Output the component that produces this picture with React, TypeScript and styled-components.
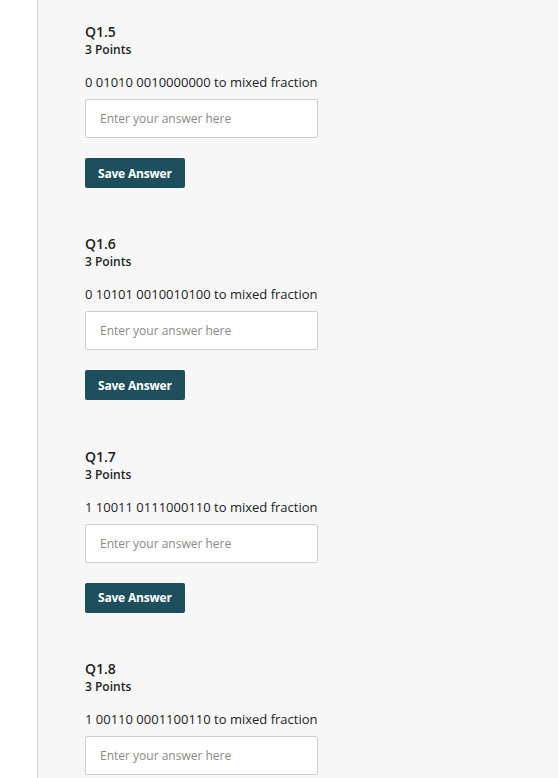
import React from 'react';
import styled, { createGlobalStyle } from 'styled-components';

type Question = {
  id: string;
  points: number;
  prompt: string;
};

const questions: Question[] = [
  { id: 'Q1.5', points: 3, prompt: '0 01010 0010000000 to mixed fraction' },
  { id: 'Q1.6', points: 3, prompt: '0 10101 0010010100 to mixed fraction' },
  { id: 'Q1.7', points: 3, prompt: '1 10011 0111000110 to mixed fraction' },
  { id: 'Q1.8', points: 3, prompt: '1 00110 0001100110 to mixed fraction' },
];

const GlobalStyle = createGlobalStyle`
  html, body {
    margin: 0;
    padding: 0;
    background: #ffffff;
    font-family: "Open Sans", "Noto Sans", sans-serif;
    color: #222;
  }
`;

const Page = styled.div`
  display: flex;
  height: 778px;
  overflow: hidden;
`;

const Sidebar = styled.div`
  width: 37px;
  flex-shrink: 0;
  background: #ffffff;
`;

const Main = styled.main`
  flex: 1;
  background: #f7f7f7;
  border-left: 1px solid #d6d6d6;
  padding: 22px 0 0 47px;
`;

const Block = styled.section`
  height: 212.3px;
`;

const Title = styled.h3`
  margin: 0;
  font-size: 14px;
  font-weight: 600;
  line-height: 19px;
  color: #222;
`;

const Points = styled.div`
  font-size: 12px;
  font-weight: 600;
  line-height: 17px;
  color: #222;
`;

const Prompt = styled.p`
  margin: 15px 0 8px;
  font-size: 13px;
  line-height: 18px;
  color: #222;
`;

const AnswerInput = styled.input`
  box-sizing: border-box;
  display: block;
  width: 233px;
  height: 39px;
  padding: 0 14px;
  border: 1px solid #cfcfcf;
  border-radius: 2px;
  background: #ffffff;
  font-family: inherit;
  font-size: 12px;
  color: #222;

  &::placeholder {
    color: #8a8a8a;
  }
`;

const SaveButton = styled.button`
  margin-top: 20px;
  height: 30px;
  padding: 0 13px;
  border: none;
  border-radius: 2px;
  background: #1e4f5c;
  color: #ffffff;
  font-family: inherit;
  font-size: 12px;
  font-weight: 700;
  letter-spacing: -0.2px;
  cursor: pointer;
`;

const QuestionBlock = ({ id, points, prompt }: Question) => (
  <Block>
    <Title>{id}</Title>
    <Points>{points} Points</Points>
    <Prompt>{prompt}</Prompt>
    <AnswerInput placeholder="Enter your answer here" />
    <SaveButton>Save Answer</SaveButton>
  </Block>
);

export default function App() {
  return (
    <>
      <GlobalStyle />
      <Page>
        <Sidebar />
        <Main>
          {questions.map((q) => (
            <QuestionBlock key={q.id} {...q} />
          ))}
        </Main>
      </Page>
    </>
  );
}
